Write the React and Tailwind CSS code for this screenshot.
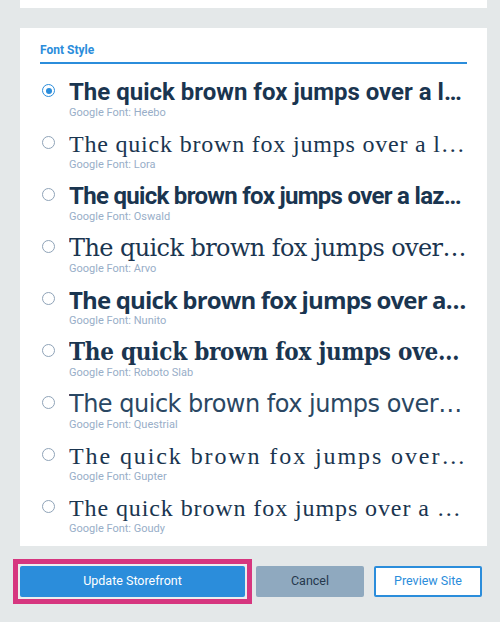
import React, { useState } from 'react';

const fonts = [
  { name: 'Heebo', className: 'font-bold', family: '"Roboto", "Liberation Sans", sans-serif' },
  { name: 'Lora', className: 'font-normal tracking-[0.8px]', family: '"Liberation Serif", serif' },
  { name: 'Oswald', className: 'font-bold tracking-[-0.7px]', family: '"Roboto", "Liberation Sans", sans-serif' },
  { name: 'Arvo', className: 'font-normal tracking-[-0.6px]', family: '"DejaVu Serif", serif' },
  { name: 'Nunito', className: 'font-bold tracking-[-0.85px]', family: '"Open Sans", "Noto Sans", sans-serif' },
  { name: 'Roboto Slab', className: 'font-bold font-stretch-condensed tracking-[-0.25px]', family: '"DejaVu Serif", serif' },
  { name: 'Questrial', className: 'font-normal tracking-[-0.5px] text-[#2a4763]', family: '"DejaVu Sans", sans-serif' },
  { name: 'Gupter', className: 'font-normal tracking-[1.9px]', family: '"Liberation Serif", serif' },
  { name: 'Goudy', className: 'font-normal tracking-[0.9px]', family: '"Liberation Serif", serif' },
];

const Radio = ({ checked }) => (
  <span
    className={`mt-[6px] flex h-[13px] w-[13px] shrink-0 items-center justify-center rounded-full border-[1.5px] ${
      checked ? 'border-[#2b8ddb]' : 'border-[#8fa3b8]'
    }`}
  >
    {checked && <span className="h-[6px] w-[6px] rounded-full bg-[#2b8ddb]" />}
  </span>
);

export default function App() {
  const [selected, setSelected] = useState('Heebo');

  return (
    <div
      className="min-h-[622px] w-[500px] bg-[#e4e8e9]"
      style={{ fontFamily: '"Roboto", "Liberation Sans", sans-serif' }}
    >
      {/* card above, cut off */}
      <div className="ml-[20px] h-[8px] w-[467px] bg-white" />

      {/* Font style card */}
      <div className="ml-[20px] mt-[20px] w-[467px] bg-white px-[20px] pb-[10px] pt-[14px]">
        <div className="border-b-2 border-[#2b8ddb] pb-[4px]">
          <h3 className="text-[12px] font-bold leading-4 text-[#2b8ddb]">Font Style</h3>
        </div>

        <div className="flex flex-col gap-[10px] pt-[14px]">
          {fonts.map((f) => (
            <label
              key={f.name}
              className="flex cursor-pointer items-start gap-[14px] pl-[2px]"
              onClick={() => setSelected(f.name)}
            >
              <Radio checked={selected === f.name} />
              <div className="min-w-0 flex-1">
                <div
                  className={`truncate text-[24px] leading-[28px] text-[#1a3550] ${f.className}`}
                  style={{ fontFamily: f.family }}
                >
                  The quick brown fox jumps over a lazy dog
                </div>
                <div className="text-[11px] leading-[14px] text-[#98aec8]">
                  Google Font: {f.name}
                </div>
              </div>
            </label>
          ))}
        </div>
      </div>

      {/* Actions */}
      <div className="mt-[13px] flex items-center">
        <div className="ml-[13px] border-[5px] border-[#d6367f] bg-[#eceeee] p-[2px]">
          <button className="h-[31px] w-[225px] rounded-[2px] bg-[#2b8ddb] text-[12.5px] text-white">
            Update Storefront
          </button>
        </div>
        <button className="ml-[4px] h-[31px] w-[108px] rounded-[2px] bg-[#8fa9bf] text-[12.5px] text-[#25384d]">
          Cancel
        </button>
        <button className="ml-[10px] h-[31px] w-[108px] rounded-[2px] border-2 border-[#2b8ddb] bg-white text-[12.5px] text-[#2b8ddb]">
          Preview Site
        </button>
      </div>
    </div>
  );
}
